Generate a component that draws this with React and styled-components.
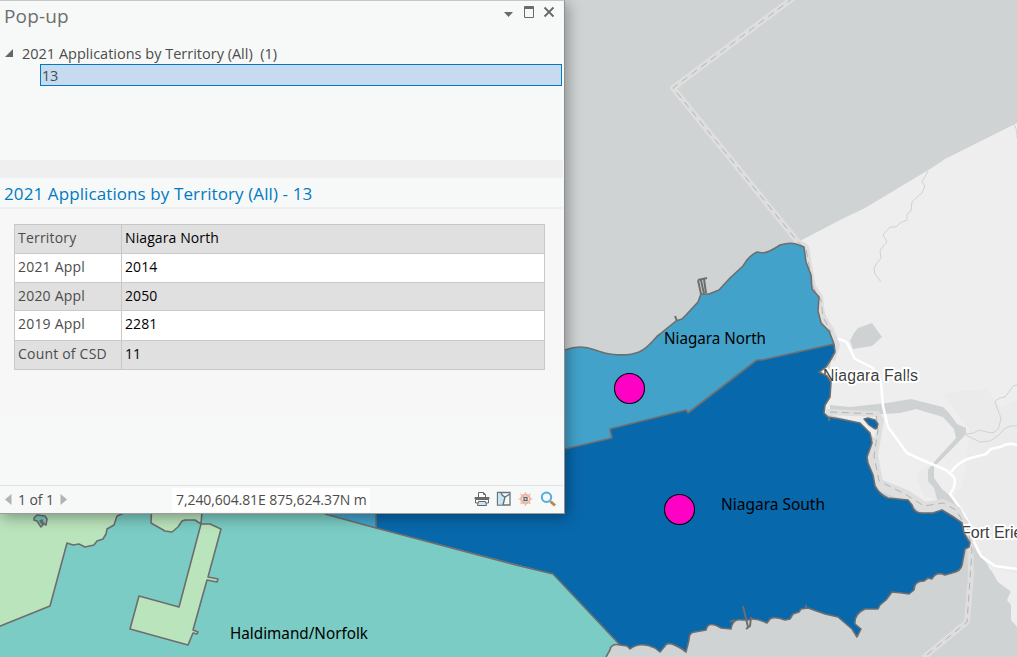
import React from "react";
import styled, { createGlobalStyle } from "styled-components";

const GlobalStyle = createGlobalStyle`
  * {
    box-sizing: border-box;
  }
  body {
    margin: 0;
    overflow: hidden;
    font-family: "Open Sans", "Noto Sans", sans-serif;
  }
`;

const Container = styled.div`
  position: relative;
  width: 1017px;
  height: 657px;
  overflow: hidden;
`;

const MapSvg = styled.svg`
  display: block;
`;

const Window = styled.section`
  position: absolute;
  top: 0;
  left: 0;
  width: 565px;
  height: 514px;
  display: flex;
  flex-direction: column;
  padding-right: 1px;
  background-color: #f7f9f8;
  border-top: 1px solid #c6c8c7;
  border-right: 1px solid #8f8f8d;
  border-bottom: 1px solid #9c9c9a;
  box-shadow: 2px 3px 14px rgba(0, 0, 0, 0.36);
`;

const TitleBar = styled.header`
  display: flex;
  justify-content: space-between;
  height: 36px;
  padding: 0 8px 0 4px;
`;

const Title = styled.h1`
  margin: 0;
  font-size: 19px;
  font-weight: 400;
  line-height: 30px;
  letter-spacing: 0.15px;
  color: #6e6e6e;
`;

const WindowButtons = styled.div`
  display: flex;
  padding-top: 5px;
  gap: 8px;
`;

const Tree = styled.div`
  height: 123px;
`;

const TreeItem = styled.div`
  display: flex;
  align-items: center;
  height: 27px;
  padding: 6px 0 0 4px;
  gap: 8px;
  font-size: 14.5px;
  white-space: pre;
  color: #4c4c4c;
`;

const Selected = styled.div`
  height: 22px;
  margin: 0 1px 0 40px;
  padding-left: 1px;
  border: 1px solid #007ac2;
  background-color: #c6dbef;
  font-size: 14.5px;
  line-height: 21px;
  letter-spacing: -0.3px;
  color: #4c4c4c;
`;

const Splitter = styled.div`
  height: 18px;
  background-color: #efefef;
`;

const Heading = styled.h2`
  height: 31px;
  margin: 0;
  padding-left: 4px;
  border-bottom: 2px solid #eeefef;
  font-size: 17px;
  font-weight: 400;
  line-height: 31px;
  letter-spacing: 0.1px;
  color: #007ac2;
`;

const Content = styled.div`
  flex: 1;
  padding: 15px 18px 0 14px;
  background: linear-gradient(#f7f7f7 75%, #f7f9f8 75%);
`;

const Table = styled.div`
  border: 1px solid #c8c8c8;
`;

const Row = styled.div`
  display: grid;
  grid-template-columns: 107px 1fr;
  height: ${(props) => props.$height}px;
  border-bottom: ${(props) => (props.$last ? 0 : 1)}px solid #cacaca;
  background-color: ${(props) => (props.$shaded ? "#e0e0e0" : "#fff")};
`;

const Cell = styled.div`
  padding-left: 3px;
  border-right: ${(props) => (props.$name ? 1 : 0)}px solid #c8c8c8;
  font-size: 14px;
  line-height: 26px;
  letter-spacing: ${(props) => (props.$name ? 0.2 : 0.1)}px;
  color: ${(props) => (props.$name ? "#4c4c4c" : "#000")};
`;

const Footer = styled.footer`
  display: flex;
  align-items: center;
  height: 28px;
  border-top: 1px solid #e3e5e4;
  font-size: 14px;
  color: #4c4c4c;
`;

const Pager = styled.div`
  display: flex;
  align-items: center;
  width: 172px;
  padding-left: 4px;
  gap: 6px;
  line-height: 26px;
  letter-spacing: -0.1px;
`;

const Coordinates = styled.div`
  width: 198px;
  height: 24px;
  padding-left: 4px;
  background-color: #fff;
  line-height: 24px;
  letter-spacing: -0.08px;
  white-space: nowrap;
`;

const Tools = styled.div`
  display: flex;
  align-items: center;
  margin-left: auto;
  padding: 0 6px 2px 0;
  gap: 6px;
`;

const rows = [
  { name: "Territory", value: "Niagara North", height: 29 },
  { name: "2021 Appl", value: "2014", height: 29 },
  { name: "2020 Appl", value: "2050", height: 28 },
  { name: "2019 Appl", value: "2281", height: 30 },
  { name: "Count of CSD", value: "11", height: 28 },
];

const northCoast =
  "M565 350Q580 344 595 350C608 355 626 357 639 352C650 347 654 338 660 334L676 321L682 319L686 315L698 302L701 294L709 294L719 290L730 278L743 266L747 260Q752 254 757 252L763 253Q770 252 780 245Q790 242 796 244L804 247L806 262L811 275L812 289L819 297L818 311L821 323L829 331L834 344";

const southCoast =
  "M834 344L835 352L830 361L826 367L819 372L827 376L831 382L830 397L825 405L824 413L828 417L840 419L850 421L860 423L870 433L872 443L867 457L868 463L873 475L875 486Q880 495 888 498L898 499L908 500L912 505Q914 513 922 513L933 513L942 510L952 516L962 523L964 533L970 543L969 547L965 549L962 565Q961 571 952 573L945 575Q936 571 932 579L928 578L924 581Q914 581 914 590L909 594L902 593L892 592L886 600L880 605L878 609L865 609Q854 614 855 624L861 629L857 637L852 629L845 623L838 617L825 614L808 608L801 609L799 612L793 614L790 619L785 620Q774 616 770 619L767 623Q755 617 748 620L742 620Q733 618 731 629L721 628Q708 620 706 630L695 632Q689 632 689 640L686 652L682 649Q667 640 665 646L660 652L655 648Q640 641 630 649L627 646L620 645";

function BaseMap() {
  return (
    <g fill="none">
      <rect width="1017" height="657" fill="#cfd3d4" />
      <path
        fill="#eeeeee"
        d="M1017 123L945 159L930 169L865 208L840 220L800 241L810 265L815 290L824 310L834 344L826 390L824 413L860 423L876 440L868 460L877 488L908 499L960 517L973 543L977 552L988 565L990 570L996 571L998 576L998 581L1009 590L1013 589L1017 602Z"
      />
      <path fill="#ebebeb" d="M943 393L987 389L1000 407L1017 400V600L973 543L952 500L963 485L970 430Z" />
      <path fill="#eaeaea" d="M917 472L930 466L938 485L940 500L925 497L918 483Z" />
      <path fill="#eeeeee" d="M988 565L1001 570L1017 574V627L1011 620L1011 605L1007 600L1011 591L1006 588L998 582Z" />
      <path
        fill="#ced2d3"
        d="M830 405L850 407L887 403L911 399L943 407L949 413L957 424L966 428V434L951 450L934 467L934 478L942 489L957 502L965 520L972 543L960 522L940 510L934 488L928 481V470L936 460L956 438L954 429L943 417L916 409L900 413L883 414H830Z"
      />
      <path fill="#ced2d3" d="M850 341L854 333L858 328L872 323L882 337L872 346L853 349Z" />
      <g stroke="#d0d2d2" strokeWidth="1">
        <path d="M928 171L922 182L925 186L922 193L917 197L912 202L911 211L907 214L907 220L900 223L896 227L890 227L883 235L887 242L880 250L881 258L877 263L874 268L875 274L881 282" />
        <path d="M966 434Q974 434 979 430L987 432Q995 435 999 427L1001 418Q997 408 995 402Q997 398 1005 397L1011 389Q1014 384 1017 385" />
        <path d="M966 435L980 442L990 441L999 435Q1006 424 1017 426M1013 124Q1017 126 1017 138" />
      </g>
      <g stroke="#fff" strokeWidth="2.5" strokeLinejoin="round">
        <path d="M837 339Q848 340 849 347L855 359L873 368L881 383L883 406L888 427L907 453L920 459L946 470L954 477Q957 485 950 494L960 508L970 525L973 540L981 556L995 566L1017 569" />
        <path d="M951 472Q959 461 971 458L986 454L991 449L1000 447Q1009 442 1017 445" />
      </g>
      <g stroke="#dddedd" strokeWidth="6" strokeLinejoin="round">
        <path d="M793 -2L673 88L798 242L806 247L809 265L813 287L820 297L822 315L831 330L837 345L832 360M826 412L877 414L881 420L875 455L880 482L907 493L925 505L943 502L958 510L970 535L971 575L967 622L923 658" />
      </g>
      <path stroke="#dddedd" strokeWidth="8" d="M874 440L871 462L880 487L911 499L923 509L944 506L957 514L966 525" />
      <path
        stroke="#b2b3b2"
        strokeWidth="1"
        strokeDasharray="7 5"
        d="M793 -2L673 88L798 242L806 249L813 287L821 300L823 317L831 332M830 412L876 414L878 430L874 456L879 481L905 494L924 506L943 503L956 510L968 530L972 550L967 622L923 658"
      />
      <g
        fill="#3e3e3e"
        stroke="#fff"
        strokeWidth="4"
        strokeLinejoin="round"
        paintOrder="stroke"
        fontFamily="Liberation Sans, sans-serif"
        fontSize="16"
      >
        <text x="823" y="381" textLength="95">Niagara Falls</text>
        <text x="961" y="538">Fort Erie</text>
      </g>
    </g>
  );
}

function Territories() {
  return (
    <g stroke="#6e6e6e" strokeWidth="1.6" strokeLinejoin="round">
      <path
        fill="#7accc4"
        stroke="none"
        d="M0 500H330V515L376 528L553 574L620 645Q611 643 610 650L606 657H0Z"
      />
      <path fill="#0868ac" stroke="none" d={`${southCoast}L553 574L376 528V500L565 449L612 438L610 429L686 410L688 413L757 360L762 360Z`} />
      <path fill="#43a2ca" stroke="none" d={`${northCoast}L762 360L757 360L688 413L686 410L610 429L612 438L565 449L376 500V528L330 516V480Z`} />
      <path fill="none" d={northCoast} />
      <path fill="none" d={southCoast} />
      <path
        fill="none"
        d="M834 344L762 360L757 360L688 413L686 410L610 429L612 438L565 449M376 500V528M325 514L376 528L520 566L553 574L620 645Q611 643 610 650L606 657"
      />
      <path fill="#bae4bc" d="M-2 500V627L50 606L67 543L73 545L79 544L85 547L94 545L97 541L103 539L106 534L107 529L114 525L117 516L124 513V500Z" />
      <path fill="#bae4bc" d="M152 500L151 523L158 527L165 531L172 532L178 527L182 521L185 520L195 520L201 524L203 500Z" />
      <path fill="#bae4bc" d="M201 524L210 524L221 529L208 577L218 579L217 582L207 580L193 630L198 632L197 634L193 633L188 645L130 629L139 596L179 607Z" />
      <path fill="#7accc4" d="M34 518L37 515L45 516L47 519L46 525L43 523L42 520L40 521L43 525L41 527L37 521L34 520Z" />
      <path fill="none" strokeWidth="2" d="M698 280L701 294M701 280L704 294M704 279L706 293M698 280L707 278M675 316L677 321M743 606L748 627M751 617L750 626L746 629M730 622L735 620M806 605V609M829 417V421" />
      <path fill="#0868ac" strokeWidth="1.4" d="M864 419L868 418L875 420L878 424L877 428L875 429L869 425Z" />
      <g fill="#ff00c5" stroke="#000" strokeWidth="1.1">
        <circle cx="629.5" cy="388.5" r="15" />
        <circle cx="679.5" cy="509.5" r="15" />
      </g>
      <g fill="#000" stroke="none" fontFamily="Noto Sans, sans-serif" fontSize="16">
        <text x="664" y="344" textLength="102" lengthAdjust="spacingAndGlyphs">Niagara North</text>
        <text x="721" y="510" textLength="104" lengthAdjust="spacingAndGlyphs">Niagara South</text>
        <text x="230" y="639" textLength="138" lengthAdjust="spacingAndGlyphs">Haldimand/Norfolk</text>
      </g>
    </g>
  );
}

const Arrow = ({ d }) => (
  <svg width="8" height="11" fill="#b1b3b2">
    <path d={d} />
  </svg>
);

const Popup = () => {
  return (
    <Window>
      <TitleBar>
        <Title>Pop-up</Title>
        <WindowButtons>
          <svg width="11" height="13" fill="#6a6a6a">
            <path d="M1 6H10L5.5 11Z" />
          </svg>
          <svg width="12" height="13" fill="none" stroke="#6a6a6a">
            <path d="M2.5 0.5H11.5V11.5H2.5ZM2 1.5H12M2 2.5H12" />
          </svg>
          <svg width="13" height="13" fill="none" stroke="#686868" strokeWidth="1.8">
            <path d="M2.5 1.5L11.5 10.5M11.5 1.5L2.5 10.5" />
          </svg>
        </WindowButtons>
      </TitleBar>
      <Tree>
        <TreeItem>
          <svg width="10" height="10" fill="#666">
            <path d="M9 0V8H1Z" />
          </svg>
          {"2021 Applications by Territory (All)  (1)"}
        </TreeItem>
        <Selected>13</Selected>
      </Tree>
      <Splitter />
      <Heading>2021 Applications by Territory (All) - 13</Heading>
      <Content>
        <Table>
          {rows.map((row, i) => (
            <Row key={row.name} $height={row.height} $shaded={i % 2 === 0} $last={i === rows.length - 1}>
              <Cell $name>{row.name}</Cell>
              <Cell>{row.value}</Cell>
            </Row>
          ))}
        </Table>
      </Content>
      <Footer>
        <Pager>
          <Arrow d="M7.5 0V11L1 5.5Z" />
          <span>1 of 1</span>
          <Arrow d="M0.5 0V11L7 5.5Z" />
        </Pager>
        <Coordinates>7,240,604.81E 875,624.37N m</Coordinates>
        <Tools>
          <svg width="16" height="16" fill="none" stroke="#666">
            <path fill="#fff" d="M4.5 6V1.5H9.5L11.5 3.5V6" />
            <path d="M9.5 1.5V3.5H11.5" />
            <path fill="#77797a" d="M1 6.5H15V8H1Z" />
            <path fill="#f7f9f8" d="M1.5 8.5H14.5V12H1.5Z" />
            <path fill="#c7e5f5" d="M4.5 10.5H11.5L12.5 14.5H3.5Z" />
          </svg>
          <svg width="16" height="16" fill="none" stroke="#68737b">
            <path fill="#f7f9f8" strokeWidth="1.3" d="M1.5 1.5H14V14H1.5Z" />
            <path fill="#cae6f5" stroke="none" d="M2 2H5L9 6L7 13.5H2Z" />
            <path strokeWidth="1.4" d="M5 2Q6 5 9 6L14 3M9 6L7 14" />
          </svg>
          <svg width="16" height="16" fill="none" stroke="#efb5a5">
            <circle cx="7.5" cy="8" r="4.3" strokeWidth="2.2" />
            <path strokeWidth="1.2" d="M7.5 1V4M7.5 12V15M0.5 8H4M11 8H14.5M2.5 3L5 5M12.5 3L10 5M2.5 13L5 11M12.5 13L10 11" />
            <path fill="#fff" stroke="#62615f" strokeWidth="1.3" d="M6 6.5H9V9.5H6Z" />
          </svg>
          <svg width="17" height="16" fill="none">
            <circle cx="6.5" cy="6.2" r="4.7" stroke="#52aadd" strokeWidth="2" />
            <path stroke="#ba8748" strokeWidth="3" d="M10.5 10.5L15 14.5" />
          </svg>
        </Tools>
      </Footer>
    </Window>
  );
};

const App = () => {
  return (
    <Container>
      <GlobalStyle />
      <MapSvg width="1017" height="657" viewBox="0 0 1017 657">
        <BaseMap />
        <Territories />
      </MapSvg>
      <Popup />
    </Container>
  );
};

export default App;
